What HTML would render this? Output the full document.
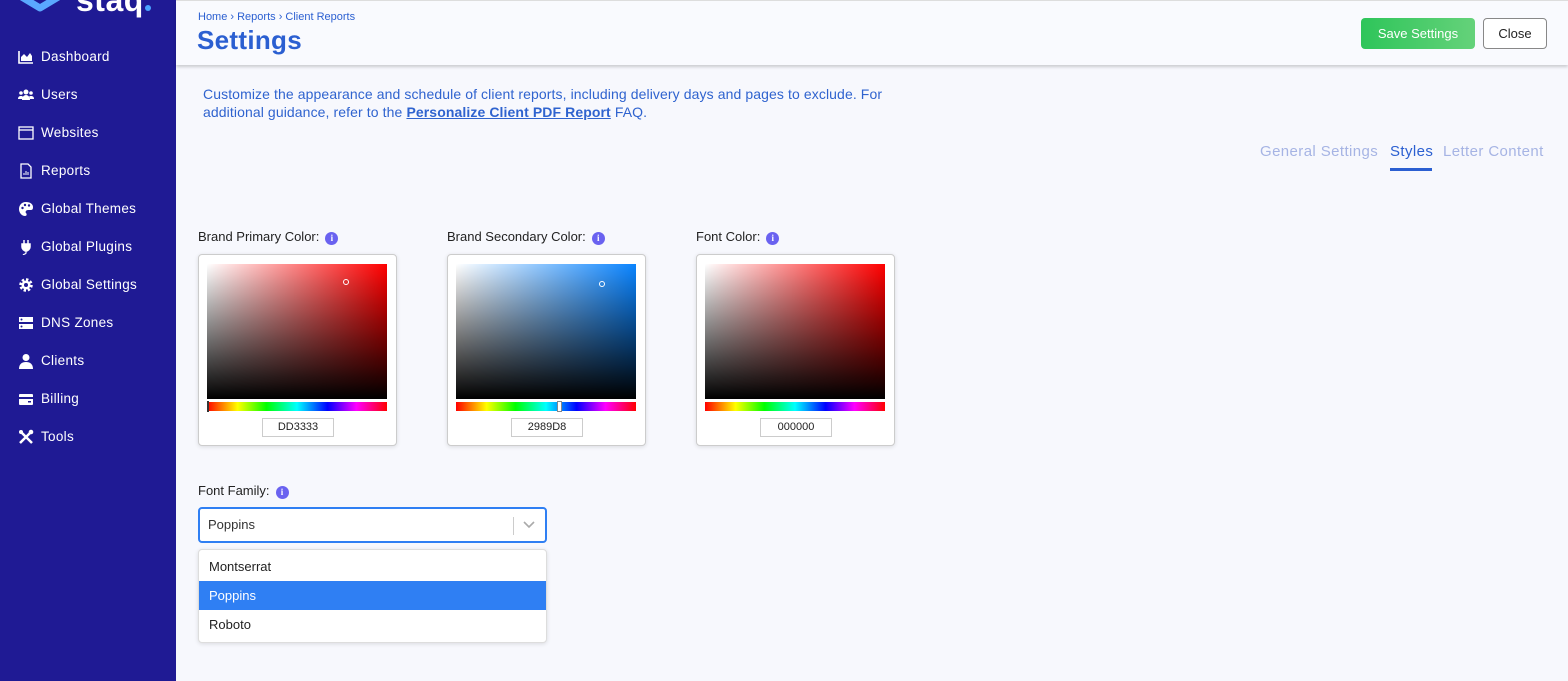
<!DOCTYPE html>
<html><head><meta charset="utf-8"><style>
*{box-sizing:border-box;margin:0;padding:0}
body{width:1568px;height:681px;overflow:hidden;background:#f7f8fd;font-family:"Liberation Sans",sans-serif;position:relative}
.side{position:absolute;left:0;top:0;width:176px;height:681px;background:#1f1a94}
.logo{position:absolute;left:76px;top:-18px;color:#fff;font-weight:bold;font-size:32px;letter-spacing:0.5px}
.logo i{display:inline-block;width:6px;height:6px;border-radius:50%;background:#4aa3ff;margin-left:1px}
.chev{position:absolute;left:18px;top:-6px;width:44px;height:18px}
.nav{position:absolute;left:0;top:0}
.nav div{position:absolute;left:18px;color:#fff;font-size:13.5px;letter-spacing:.3px;white-space:nowrap;height:16px;line-height:16px}
.nav svg{position:absolute;left:0;top:0;width:16px;height:16px}
.nav span{position:absolute;left:23px;top:0}
.head{position:absolute;left:176px;top:0;width:1392px;height:65px;background:#f9fafe;border-top:1px solid #ddd;box-shadow:0 2px 3px rgba(0,0,0,.18)}
.crumb{position:absolute;left:22px;top:10px;font-size:11px;color:#2b5fd1}
.title{position:absolute;left:21px;top:24px;font-size:26px;font-weight:bold;color:#2b5fd1;letter-spacing:.3px}
.save{position:absolute;left:1185px;top:17px;width:114px;height:31px;border-radius:4px;background:linear-gradient(90deg,#2ec55a,#65d27a);color:#fff;font-size:13px;text-align:center;line-height:31px}
.close{position:absolute;left:1307px;top:17px;width:64px;height:31px;border-radius:4px;border:1px solid #888;background:#fff;color:#222;font-size:13px;text-align:center;line-height:29px}
.desc{position:absolute;left:203px;top:85px;font-size:14px;line-height:18px;color:#2f63cf;width:735px;letter-spacing:.1px}
.desc b{text-decoration:underline}
.tabs{position:absolute;top:143px;font-size:15px;color:#a6b4e4;letter-spacing:.4px;white-space:nowrap}
.lbl{position:absolute;font-size:13px;color:#222}
.info{display:inline-block;width:13px;height:13px;border-radius:50%;background:#6a62f0;color:#fff;font-size:9px;font-weight:bold;text-align:center;line-height:13px;vertical-align:0px;margin-left:6px;font-family:"Liberation Serif",serif}
.pk{position:absolute;top:254px;width:199px;height:192px;background:#fff;border:1px solid #ccc;border-radius:4px;box-shadow:0 1px 4px rgba(0,0,0,.12)}
.sq{position:absolute;left:8px;top:9px;width:180px;height:135px}
.sq .w{position:absolute;inset:0;background:linear-gradient(90deg,#fff,rgba(255,255,255,0))}
.sq .b{position:absolute;inset:0;background:linear-gradient(0deg,#000,rgba(0,0,0,0))}
.hue{position:absolute;left:8px;top:147px;width:180px;height:9px;background:linear-gradient(90deg,#f00,#ff0 17%,#0f0 33%,#0ff 50%,#00f 67%,#f0f 83%,#f00)}
.hex{position:absolute;left:63px;top:163px;width:72px;height:19px;border:1px solid #ccc;font-size:11px;text-align:center;line-height:17px;color:#222}
.dot{position:absolute;width:6px;height:6px;border:1px solid #fff;border-radius:50%}
.sel{position:absolute;left:198px;top:507px;width:349px;height:36px;border:2px solid #2f7ff3;border-radius:4px;background:#fff}
.menu{position:absolute;left:198px;top:549px;width:349px;height:94px;background:#fff;border:1px solid #ddd;border-radius:4px;box-shadow:0 1px 4px rgba(0,0,0,.12);font-size:13px;color:#222}
.menu div{height:29px;line-height:29px;padding-left:10px}
</style></head><body>
<div class="side">
<svg class="chev" viewBox="0 0 44 18"><path d="M2 2 L22 14 L42 2" stroke="#5aa8ff" stroke-width="7" fill="none" stroke-linejoin="round"/></svg>
<div class="logo">staq<i></i></div>
<div class="nav">
<div style="top:49px"><svg viewBox="0 0 16 16"><path d="M1 2v12h14" stroke="#fff" stroke-width="1.6" fill="none"/><path d="M3 12V8l3-3 3 3 3-4 2 3v5z" fill="#fff"/></svg><span>Dashboard</span></div>
<div style="top:87px"><svg viewBox="0 0 16 16"><circle cx="8" cy="5" r="2.5" fill="#fff"/><circle cx="3" cy="6" r="1.8" fill="#fff"/><circle cx="13" cy="6" r="1.8" fill="#fff"/><path d="M4 13c0-3 2-5 4-5s4 2 4 5zM0 12c0-2 1-3 3-3s2 1 2 1l-1 2zM16 12c0-2-1-3-3-3s-2 1-2 1l1 2z" fill="#fff"/></svg><span>Users</span></div>
<div style="top:125px"><svg viewBox="0 0 16 16"><rect x="1" y="2" width="14" height="12" stroke="#fff" stroke-width="1.3" fill="none"/><path d="M1 5h14" stroke="#fff" stroke-width="1.3"/></svg><span>Websites</span></div>
<div style="top:163px"><svg viewBox="0 0 16 16"><path d="M3 1h7l3 3v11H3z" stroke="#fff" stroke-width="1.3" fill="none"/><path d="M6 12v-2M8 12V8M10 12v-3" stroke="#fff"/></svg><span>Reports</span></div>
<div style="top:201px"><svg viewBox="0 0 16 16"><path d="M8 1C3 1 1 5 1 8c0 4 3 7 6 7 2 0 2-2 1-3s0-3 2-3h3c2 0 2-2 2-3 0-3-3-5-7-5z" fill="#fff"/><circle cx="4.5" cy="7" r="1.2" fill="#1f1a94"/><circle cx="7" cy="4" r="1.2" fill="#1f1a94"/><circle cx="11" cy="4.5" r="1.2" fill="#1f1a94"/></svg><span>Global Themes</span></div>
<div style="top:239px"><svg viewBox="0 0 16 16"><path d="M6 1v4M10 1v4M4 5h8v3c0 2-2 4-4 4s-4-2-4-4z" stroke="#fff" stroke-width="1.5" fill="#fff"/><path d="M8 12v2c0 1-2 1-3 2" stroke="#fff" stroke-width="1.2" fill="none"/></svg><span>Global Plugins</span></div>
<div style="top:277px"><svg viewBox="0 0 16 16"><circle cx="8" cy="8" r="5" fill="none" stroke="#fff" stroke-width="3.5" stroke-dasharray="2.2 1.7"/><circle cx="8" cy="8" r="4.5" fill="#fff"/><circle cx="8" cy="8" r="2" fill="#1f1a94"/></svg><span>Global Settings</span></div>
<div style="top:315px"><svg viewBox="0 0 16 16"><rect x="1" y="2" width="14" height="5" fill="#fff"/><rect x="1" y="9" width="14" height="5" fill="#fff"/><circle cx="3.5" cy="4.5" r="1" fill="#1f1a94"/><circle cx="3.5" cy="11.5" r="1" fill="#1f1a94"/></svg><span>DNS Zones</span></div>
<div style="top:353px"><svg viewBox="0 0 16 16"><circle cx="8" cy="4.5" r="3.5" fill="#fff"/><path d="M1 16c0-5 3-7 7-7s7 2 7 7z" fill="#fff"/></svg><span>Clients</span></div>
<div style="top:391px"><svg viewBox="0 0 16 16"><rect x="1" y="3" width="14" height="11" rx="1" fill="#fff"/><rect x="1" y="6" width="14" height="2" fill="#1f1a94"/><rect x="10" y="10" width="3" height="1.5" fill="#1f1a94"/></svg><span>Billing</span></div>
<div style="top:429px"><svg viewBox="0 0 16 16"><path d="M2 2l12 12M14 2L2 14" stroke="#fff" stroke-width="2.5"/><circle cx="3" cy="3" r="2" fill="#fff"/><circle cx="13" cy="3" r="2.3" fill="#fff"/></svg><span>Tools</span></div>
</div></div>

<div class="head">
<div class="crumb">Home › Reports › Client Reports</div>
<div class="title">Settings</div>
<div class="save">Save Settings</div>
<div class="close">Close</div>
</div>

<div class="desc">Customize the appearance and schedule of client reports, including delivery days and pages to exclude. For additional guidance, refer to the <b>Personalize Client PDF Report</b> FAQ.</div>

<div class="tabs" style="left:1260px">General Settings</div>
<div class="tabs" style="left:1390px;color:#2b5fd1">Styles</div>
<div style="position:absolute;left:1390px;top:168px;width:42px;height:3px;background:#2b5fd1"></div>
<div class="tabs" style="left:1443px">Letter Content</div>

<div class="lbl" style="left:198px;top:229px">Brand Primary Color:<span class="info">i</span></div>
<div class="lbl" style="left:447px;top:229px">Brand Secondary Color:<span class="info">i</span></div>
<div class="lbl" style="left:696px;top:229px">Font Color:<span class="info">i</span></div>

<div class="pk" style="left:198px"><div class="sq" style="background:#f00"><div class="w"></div><div class="b"></div></div><div class="dot" style="left:144px;top:24px"></div><div class="hue"></div><div style="position:absolute;left:8px;top:146px;width:2px;height:11px;background:#fff;border:1px solid #333"></div><div class="hex">DD3333</div></div>
<div class="pk" style="left:447px"><div class="sq" style="background:#0a84ff"><div class="w"></div><div class="b"></div></div><div class="dot" style="left:151px;top:26px"></div><div class="hue"></div><div style="position:absolute;left:109px;top:146px;width:5px;height:11px;background:#fff;border:1px solid #888"></div><div class="hex">2989D8</div></div>
<div class="pk" style="left:696px"><div class="sq" style="background:#f00"><div class="w"></div><div class="b"></div></div><div class="hue"></div><div class="hex">000000</div></div>

<div class="lbl" style="left:198px;top:483px">Font Family:<span class="info">i</span></div>
<div class="sel"><span style="position:absolute;left:8px;top:8px;font-size:13px;color:#333">Poppins</span><div style="position:absolute;left:313px;top:8px;width:1px;height:18px;background:#ccc"></div><svg style="position:absolute;left:323px;top:12px" width="12" height="8" viewBox="0 0 12 8"><path d="M1 1l5 5 5-5" stroke="#aaa" stroke-width="1.6" fill="none"/></svg></div>
<div class="menu" style="padding-top:2px"><div>Montserrat</div><div style="background:#2f7ff3;color:#fff">Poppins</div><div>Roboto</div></div>
</body></html>
